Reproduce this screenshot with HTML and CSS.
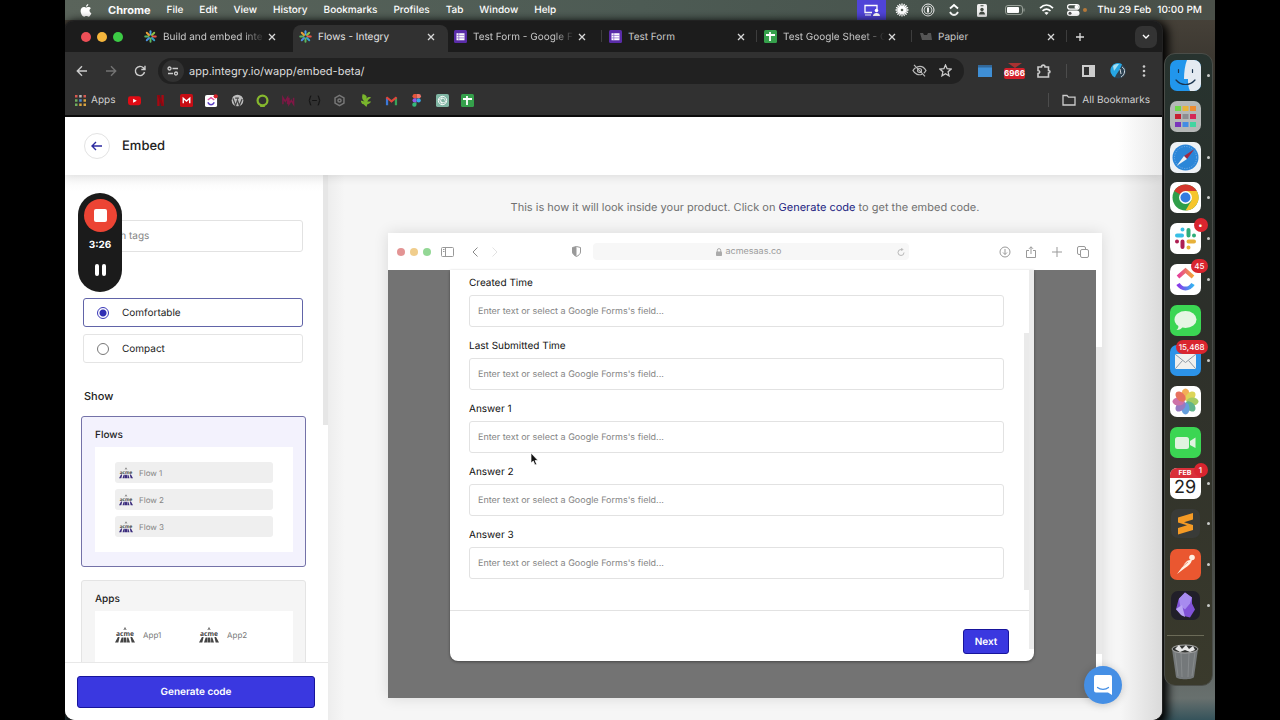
FILE: index.html
```html
<!DOCTYPE html>
<html lang="en">
<head>
<meta charset="utf-8">
<title>Flows - Integry</title>
<link rel="stylesheet" href="styles.css">
</head>
<body>
<svg class="defs" aria-hidden="true">
  <symbol id="integry" viewBox="0 0 16 16"><g stroke-width="2.4" stroke-linecap="round"><path d="M8 5.500V1.500" stroke="#4aa3e8"/><path d="M9.800 6.200l2.800-2.800" stroke="#8bc34a"/><path d="M10.500 8h4" stroke="#e8574a"/><path d="M9.800 9.800l2.800 2.800" stroke="#35a0c8"/><path d="M8 10.500v4" stroke="#5cb85c"/><path d="M6.200 9.800l-2.800 2.800" stroke="#4a8fe0"/><path d="M5.500 8h-4" stroke="#58b368"/><path d="M6.200 6.200L3.400 3.400" stroke="#e8a03a"/></g></symbol>
  <symbol id="x" viewBox="0 0 8 8"><path d="M1 1l6 6M7 1L1 7" stroke="#d8d8d8" stroke-width="1.300"/></symbol>
  <symbol id="gform" viewBox="0 0 13 13"><rect width="13" height="13" rx="1.500" fill="#5a2ca8"/><path d="M2.500 3.200h8v7h-8z" fill="#fff"/><path d="M2.500 5.400h8M2.500 7.900h8M4.800 3v7.500" stroke="#8a63c9" stroke-width=".7"/></symbol>
  <symbol id="gsheet" viewBox="0 0 13 13"><rect width="13" height="13" rx="1.500" fill="#35a04b"/><path d="M6 2v9M2 5h9" stroke="#fff" stroke-width="1.800"/></symbol>
  <symbol id="acme" viewBox="0 0 24 20"><path d="M10.500 4L12 1l1.500 3M11 3h2" fill="none" stroke="#555" stroke-width=".8"/><text x="12" y="11" text-anchor="middle" class="acme-word">acme</text><path d="M3.500 12.500h2L4 19H0zM8 13h2l-.5 6H6zM10.500 13h3l.5 6h-4zM14.500 13H16l2 6h-3.500zM18.500 12.500h2L24 19h-4z" fill="currentColor"/></symbol>
</svg>
<div class="screen">
  <header class="menubar">
    <nav class="menus">
      <svg class="apple" viewBox="0 0 12 14" fill="#fff"><path d="M8.500 0C8.500 1.600 7.300 3 6 3 5.900 1.500 7.200.2 8.500 0zM6.200 3.900c.6 0 1.300-.6 2.500-.6 1 0 2 .6 2.600 1.400-2.200 1.300-1.900 4.200.5 5.200-.7 1.800-1.800 3.700-3.100 3.700-.9 0-1.200-.6-2.300-.6-1.200 0-1.500.6-2.300.6C2.500 13.600.2 10.600.2 7.500c0-2.700 1.700-4.200 3.500-4.200 1.100 0 1.900.6 2.500.6z"/></svg>
      <b>Chrome</b><span>File</span><span>Edit</span><span>View</span><span>History</span><span>Bookmarks</span><span>Profiles</span><span>Tab</span><span>Window</span><span>Help</span>
    </nav>
    <div class="status">
      <span class="st share"><svg width="16" height="12" viewBox="0 0 16 12"><path d="M8 8.500H1V1.500h12V5" fill="none" stroke="#fff" stroke-width="1.300"/><circle cx="12.500" cy="6.500" r="1.800" fill="#fff"/><path d="M9 12c0-4 7-4 7 0zM1 10.500h6v1H1z" fill="#fff"/></svg></span>
      <span class="st"><svg width="14" height="14" viewBox="0 0 14 14" stroke="#fff" stroke-width="1.300" stroke-linecap="round"><circle cx="7" cy="7" r="3.300" fill="#fff"/><path d="M7 1v12M1 7h12M2.800 2.800l8.400 8.400M11.200 2.800l-8.400 8.400M4.700 1.500l4.600 11M9.300 1.500l-4.600 11M1.500 4.700l11 4.600M1.500 9.300l11-4.600"/><circle cx="7" cy="7" r="1.300" fill="#566056" stroke="none"/></svg></span>
      <span class="st"><svg width="14" height="14" viewBox="0 0 14 14" fill="none" stroke="#eee"><circle cx="7" cy="7" r="6"/><circle cx="7" cy="7" r="4" stroke-width=".8"/><path d="M7 4.500v5" stroke-width="2"/></svg></span>
      <span class="st"><svg width="12" height="14" viewBox="0 0 12 14" fill="none" stroke="#fff" stroke-width="1.800"><path d="M2 5.500l4-3.500 4 3.500M2 9c2 4 6 4 8 0"/></svg></span>
      <span class="st id"><svg width="10" height="13" viewBox="0 0 10 13"><rect width="10" height="13" rx="1.500" fill="#eee"/><circle cx="5" cy="5.500" r="1.700" fill="#434b43"/><path d="M2 10.500c0-4 6-4 6 0zM3.500 1.300h3v1h-3z" fill="#434b43"/></svg></span>
      <span class="st wide"><svg width="20" height="10" viewBox="0 0 20 10"><rect x=".5" y=".5" width="17" height="9" rx="2.500" fill="none" stroke="#9aa29a"/><rect x="2" y="2" width="12" height="6" rx="1" fill="#fff"/><path d="M19 3.500v3" stroke="#9aa29a"/></svg></span>
      <span class="st"><svg width="15" height="12" viewBox="0 0 15 12" fill="none" stroke="#fff" stroke-width="1.700"><path d="M1 4.200c4-4 9-4 13 0M3.500 6.900c2.500-2.300 5.500-2.300 8 0"/><path d="M5.300 8.800c1.500-1 2.900-1 4.400 0L7.500 11z" fill="#fff" stroke="none"/></svg></span>
      <span class="st cc"><svg width="13" height="12" viewBox="0 0 13 12"><rect x=".6" y=".6" width="11.500" height="4.500" rx="2.200" fill="none" stroke="#fff" stroke-width="1.200"/><circle cx="9.500" cy="2.900" r="2" fill="#fff"/><rect y="6.500" width="12.500" height="5.500" rx="2.700" fill="#fff"/><circle cx="3" cy="9.200" r="1.500" fill="#555"/></svg><i></i></span>
      <span>Thu 29 Feb</span><span>10:00 PM</span>
    </div>
  </header>
  <div class="desktop">
    <main class="browser">
      <div class="tabs">
        <div class="lights"><i></i><i></i><i></i></div>
        <div class="tab"><svg class="fav"><use href="#integry"/></svg><span class="fade">Build and embed inte</span><button aria-label="Close tab"><svg><use href="#x"/></svg></button></div>
        <div class="tab active"><svg class="fav"><use href="#integry"/></svg><span>Flows - Integry</span><button aria-label="Close tab"><svg><use href="#x"/></svg></button></div>
        <div class="tab sep"><svg class="fav"><use href="#gform"/></svg><span class="fade">Test Form - Google F</span><button aria-label="Close tab"><svg><use href="#x"/></svg></button></div>
        <div class="tab sep"><svg class="fav"><use href="#gform"/></svg><span>Test Form</span><button aria-label="Close tab"><svg><use href="#x"/></svg></button></div>
        <div class="tab sep"><svg class="fav"><use href="#gsheet"/></svg><span class="fade">Test Google Sheet - G</span><button aria-label="Close tab"><svg><use href="#x"/></svg></button></div>
        <div class="tab sep"><svg class="fav" viewBox="0 0 13 13"><path d="M1 3h3l1 2h3l1-2h3l1 7H3z" fill="#555"/></svg><span>Papier</span><button aria-label="Close tab"><svg><use href="#x"/></svg></button></div>
        <button class="newtab" aria-label="New tab"><svg width="10" height="10" viewBox="0 0 10 10"><path d="M5 1v8M1 5h8" stroke="#ddd" stroke-width="1.300"/></svg></button>
        <button class="tabmenu" aria-label="Search tabs"><svg width="8" height="6" viewBox="0 0 8 6"><path d="M1 1l3 3 3-3" fill="none" stroke="#fff" stroke-width="1.400"/></svg></button>
      </div>
      <div class="toolbar">
        <div class="navs">
          <button aria-label="Back"><svg width="12" height="12" viewBox="0 0 12 12" fill="none" stroke="#ccc" stroke-width="1.400"><path d="M11 6H1.500M6 1.300L1.300 6 6 10.700"/></svg></button>
          <button aria-label="Forward"><svg width="12" height="12" viewBox="0 0 12 12" fill="none" stroke="#737373" stroke-width="1.400"><path d="M1 6h9.500M6 1.300L10.700 6 6 10.700"/></svg></button>
          <button aria-label="Reload"><svg width="12" height="12" viewBox="0 0 12 12" fill="none" stroke="#ccc" stroke-width="1.400"><path d="M10.500 7A4.600 4.600 0 1 1 9.300 2.800L10.800 4.300M11 .8v3.700H7.300"/></svg></button>
        </div>
        <div class="omni">
          <button class="site" aria-label="Site settings"><svg width="12" height="10" viewBox="0 0 12 10" fill="none" stroke="#ccc" stroke-width="1.300"><path d="M5.500 2.500H11M1 7.500h5"/><circle cx="2.500" cy="2.500" r="1.500"/><circle cx="9" cy="7.500" r="1.500"/></svg></button>
          <input type="text" aria-label="Address" value="app.integry.io/wapp/embed-beta/">
          <svg width="15" height="13" viewBox="0 0 15 13" fill="none" stroke="#bbb" stroke-width="1.200"><path d="M2 .8l11 11.500M5 3C9 1.500 12 3 14 6.500c-.6 1.200-1.300 2-2.200 2.700M3.500 3.800C2.500 4.500 1.500 5.500 1 6.500c2 4 6 5 9 3.700"/><circle cx="7.500" cy="6.500" r="2"/></svg>
          <svg width="13" height="13" viewBox="0 0 13 13" fill="none" stroke="#ccc" stroke-width="1.300"><path d="M6.500 1l1.600 3.700 4 .4-3 2.700.9 4-3.500-2.100L3 11.800l.9-4-3-2.700 4-.4z"/></svg>
        </div>
        <div class="exts">
          <svg width="14" height="14" viewBox="0 0 14 14"><rect y="1" width="14" height="12" fill="#3f8fd6"/><path d="M0 1h14v2.500H0z" fill="#32689a"/></svg>
          <span class="count"><svg width="14" height="5" viewBox="0 0 14 5"><path d="M0 0h14L7 5z" fill="#a83232"/></svg><b>6966</b></span>
          <svg width="14" height="14" viewBox="0 0 14 14" fill="none" stroke="#ccc" stroke-width="1.600"><path d="M1 3h3.500C4.500.5 8 .5 8 3h3.500v3.500c2 0 2 2.500 0 2.500v4H1V9.500c2.300-.3 2.300-2.700 0-3z"/></svg>
          <i class="bar"></i>
          <svg width="13" height="12" viewBox="0 0 13 12"><rect x="1" y="1" width="11" height="10" fill="none" stroke="#ccc" stroke-width="2"/><path d="M7 1h5v10H7z" fill="#ccc"/></svg>
          <svg width="17" height="16" viewBox="0 0 17 16"><circle cx="8.500" cy="8" r="7.500" fill="#2d4252"/><path d="M12 1.300A7.500 7.500 0 1 0 5 14.500C6 11 9 9 12 1.300z" fill="#27a7e5"/><path d="M3 3c2-2 4-2 6-2L4 8z" fill="#a6e0f3"/><path d="M12 4c4 2 3 8-1 10M10 6l1 5" fill="none" stroke="#cfd7dd"/></svg>
          <svg width="4" height="12" viewBox="0 0 4 12" fill="#ccc"><circle cx="2" cy="1.500" r="1.300"/><circle cx="2" cy="6" r="1.300"/><circle cx="2" cy="10.500" r="1.300"/></svg>
        </div>
      </div>
      <div class="bookmarks">
        <a href="#" class="apps"><svg width="11" height="11" viewBox="0 0 11 11"><path d="M0 0h2.500v2.500H0z" fill="#d85a50"/><path d="M4.200 0h2.500v2.500H4.200z" fill="#bbb"/><path d="M8.500 0H11v2.500H8.500z" fill="#d85a50"/><path d="M0 4.200h2.500v2.500H0z" fill="#6fae5f"/><path d="M4.200 4.200h2.500v2.500H4.200z" fill="#4b8bd4"/><path d="M8.500 4.200H11v2.500H8.500z" fill="#d9a441"/><path d="M0 8.500h2.500V11H0z" fill="#6fae5f"/><path d="M4.200 8.500h2.500V11H4.200z" fill="#d9a441"/><path d="M8.500 8.500H11V11H8.500z" fill="#d9a441"/></svg>Apps</a>
        <div class="bm">
          <svg viewBox="0 0 14 14"><rect y="2.500" width="14" height="9.500" rx="2.500" fill="#e00b14"/><path d="M5.500 5v4.500l4-2.200z" fill="#fff"/></svg>
          <svg viewBox="0 0 14 14"><path d="M3.500 1H6v12H3.500zM8 1h2.500v12H8z" fill="#a80812"/><path d="M3.500 1H6l4.500 12H8z" fill="#8c0710"/></svg>
          <svg viewBox="0 0 14 14"><rect width="14" height="14" rx="2" fill="#c80d14"/><path d="M3.500 10V4.500L7 7.500l3.500-3V10" fill="none" stroke="#fff" stroke-width="1.500"/></svg>
          <svg viewBox="0 0 14 14"><rect y="1" width="13" height="13" rx="2" fill="#fff"/><path d="M3 6.500l3.500-2.500L10 6.500" fill="none" stroke="#e050a0" stroke-width="1.500"/><path d="M3 9c2 3.500 5 3.500 7 0" fill="none" stroke="#5b3fc2" stroke-width="1.700"/><circle cx="11.500" cy="2.500" r="2.300" fill="#d5232b"/></svg>
          <svg viewBox="0 0 14 14"><circle cx="7" cy="7" r="6.300" fill="#bdbdbd"/><path d="M2 4.500l3 8 2-6 2 6 3-7M4.500 4.500h4" fill="none" stroke="#444" stroke-width="1.300"/></svg>
          <svg viewBox="0 0 14 14"><circle cx="7" cy="7" r="5.300" fill="none" stroke="#86b82e" stroke-width="2.400"/><path d="M4.500 13.500h5" stroke="#86b82e" stroke-width="1.500"/></svg>
          <svg viewBox="0 0 14 14" fill="none" stroke="#7e1745" stroke-width="1.600"><path d="M1 11V4l2.500 4L6 4v7M7.500 4v7l2.500-4 2.500 4V4"/></svg>
          <svg viewBox="0 0 14 14" fill="none" stroke="#141414" stroke-width="1.300"><path d="M3.500 2C1.500 2 2.800 7 .8 7c2 0 .7 5 2.700 5M10.500 2c2 0 .7 5 2.700 5-2 0-.7 5-2.700 5M4.500 7h5"/></svg>
          <svg viewBox="0 0 14 14" fill="none" stroke="#777" stroke-width="1.600"><path d="M7 1.500l4.800 2.700v5.600L7 12.500 2.200 9.800V4.200z"/><circle cx="7" cy="7" r="1.700"/></svg>
          <svg viewBox="0 0 14 14"><path d="M4 0c4 1 5 3 4 5 2-2 4-2 5-1-2 1-3 2-4 4h4c-1 2-3 3-4 3l-1 3-3-3c-2 0-3-2-3-4l4 1C3 6 3 3 4 0z" fill="#79b52c"/></svg>
          <svg viewBox="0 0 14 14" fill="none" stroke-width="2.400"><path d="M2.200 12V4" stroke="#3c78d8"/><path d="M11.800 12V4" stroke="#37a35a"/><path d="M1.500 3.500L7 8l5.500-4.500" stroke="#e0443a"/></svg>
          <svg viewBox="0 0 14 14"><path d="M7 0H5a2.300 2.300 0 0 0 0 4.600h2z" fill="#e8553a"/><path d="M7 0h2.500a2.300 2.300 0 0 1 0 4.600H7z" fill="#f0776b"/><path d="M7 4.600H5a2.300 2.300 0 0 0 0 4.600h2z" fill="#9059e8"/><circle cx="9.300" cy="6.900" r="2.300" fill="#35a8e8"/><path d="M7 9.200H5a2.300 2.300 0 1 0 2 2.300z" fill="#34b878"/></svg>
          <svg viewBox="0 0 14 14"><rect width="14" height="14" rx="2" fill="#7fb5a3"/><g fill="none" stroke="#fff"><circle cx="7" cy="7" r="4.500"/><path d="M4 4.500l5 .5 1.500 4M10 9.500L5 9 3.500 5M7 2.500L5 7l2 4.500" stroke-width=".8"/></g></svg>
          <svg><use href="#gsheet"/></svg>
        </div>
        <a href="#" class="all"><svg width="14" height="12" viewBox="0 0 14 12" fill="none" stroke="#ccc" stroke-width="1.300"><path d="M1 1.500h4l1.500 1.700H13V11H1z"/></svg>All Bookmarks</a>
      </div>
      <div class="page">
        <header class="apphead">
          <button aria-label="Back"><svg width="12" height="10" viewBox="0 0 12 10" fill="none" stroke="#2c2aa0" stroke-width="1.400"><path d="M11 5H1.500M5 1L1 5l4 4"/></svg></button>
          <h1>Embed</h1>
        </header>
        <div class="cols">
          <aside class="side">
            <div class="scroll">
              <form class="opts">
                <input class="tags" type="text" placeholder="Search tags" aria-label="Search tags">
                <label class="radio on"><input type="radio" name="density" checked>Comfortable</label>
                <label class="radio"><input type="radio" name="density">Compact</label>
              </form>
              <h2>Show</h2>
              <section class="card sel">
                <h3>Flows</h3>
                <ul class="flows">
                  <li><svg><use href="#acme"/></svg>Flow 1</li>
                  <li><svg><use href="#acme"/></svg>Flow 2</li>
                  <li><svg><use href="#acme"/></svg>Flow 3</li>
                </ul>
              </section>
              <section class="card">
                <h3>Apps</h3>
                <ul class="applist">
                  <li><svg><use href="#acme"/></svg>App1</li>
                  <li><svg><use href="#acme"/></svg>App2</li>
                </ul>
              </section>
              <i class="thumb"></i>
            </div>
            <footer><button class="primary">Generate code</button></footer>
            <div class="recorder">
              <button class="stop" aria-label="Stop recording"><i></i></button>
              <time>3:26</time>
              <button class="pause" aria-label="Pause"><i></i><i></i></button>
            </div>
          </aside>
          <section class="stage">
            <p class="hint">This is how it will look inside your product. Click on <a href="#">Generate code</a> to get the embed code.</p>
            <div class="preview">
              <div class="pbar">
                <div class="plights"><i></i><i></i><i></i></div>
                <svg width="13" height="10" viewBox="0 0 13 10" fill="none" stroke="#999"><rect x=".5" y=".5" width="12" height="9" rx="1"/><path d="M4.500 0v10M2 2.500h1.500M2 4.500h1.500"/></svg>
                <svg class="prev" width="26" height="10" viewBox="0 0 26 10" fill="none"><path d="M5.500.5L1 5l4.500 4.500" stroke="#888"/><path d="M20.500.5L25 5l-4.500 4.500" stroke="#e2e2e2"/></svg>
                <svg class="shield" width="9" height="11" viewBox="0 0 9 11"><path d="M4.500.5l4 1v4.500c0 2-2 3.500-4 4.500-2-1-4-2.500-4-4.500V1.500z" fill="#fff" stroke="#999"/><path d="M4.500.5v10c-2-1-4-2.500-4-4.500V1.500z" fill="#999"/></svg>
                <div class="purl"><span><svg width="6" height="8" viewBox="0 0 6 8"><rect y="3.500" width="6" height="4.500" rx=".8" fill="#aaa"/><path d="M1.300 4V2.300a1.700 1.700 0 0 1 3.400 0V4" fill="none" stroke="#aaa"/></svg>acmesaas.co</span><svg width="8" height="8" viewBox="0 0 8 8" fill="none" stroke="#aaa" stroke-width=".8"><path d="M7 4.500A3 3 0 1 1 4 1.500h1.500M4.300 0l1.500 1.500L4.300 3"/></svg></div>
                <div class="ptools">
                  <svg viewBox="0 0 12 12"><circle cx="6" cy="6" r="5"/><path d="M6 3v5.500M4 6.500l2 2 2-2"/></svg>
                  <svg viewBox="0 0 12 12"><path d="M4 4.500H1.500v7h9v-7H8M6 8V.8M4 2.800l2-2 2 2"/></svg>
                  <svg viewBox="0 0 12 12"><path d="M6 1v10M1 6h10"/></svg>
                  <svg viewBox="0 0 12 12"><rect x="3.500" y="3.500" width="8" height="8" rx="1.500"/><path d="M3.500 8.500H2A1.500 1.500 0 0 1 .5 7V2A1.500 1.500 0 0 1 2 .5h5A1.500 1.500 0 0 1 8.500 2v1.500"/></svg>
                </div>
              </div>
              <div class="pbody">
                <div class="backdrop">
                  <form class="modal">
                    <div class="mmain">
                      <div class="fields">
                        <label>Created Time<input type="text" placeholder="Enter text or select a Google Forms's field..."></label>
                        <label>Last Submitted Time<input type="text" placeholder="Enter text or select a Google Forms's field..."></label>
                        <label>Answer 1<input type="text" placeholder="Enter text or select a Google Forms's field..."></label>
                        <label>Answer 2<input type="text" placeholder="Enter text or select a Google Forms's field..."></label>
                        <label>Answer 3<input type="text" placeholder="Enter text or select a Google Forms's field..."></label>
                        <i class="fthumb"></i>
                      </div>
                      <div class="mfoot"><button type="button" class="primary next">Next</button></div>
                    </div>
                    <i class="mtrack"></i>
                  </form>
                </div>
                <div class="ptrack"><i></i></div>
              </div>
            </div>
            <button class="chat" aria-label="Open chat"><svg width="18" height="20" viewBox="0 0 18 20"><path d="M2 0h14a2 2 0 0 1 2 2v18l-4-2.500H2a2 2 0 0 1-2-2V2a2 2 0 0 1 2-2z" fill="#fff"/><path d="M3.500 12.500c3 2.600 8 2.600 11 0" fill="none" stroke="#458fe5" stroke-width="1.200" stroke-linecap="round"/></svg></button>
            <svg class="pointer" width="9" height="14" viewBox="0 0 9 14"><path d="M1 1v10l2.300-2 1.600 4 1.800-.8L5 8.500h3z" fill="#111" stroke="#fff" stroke-width=".7"/></svg>
          </section>
        </div>
      </div>
    </main>
    <aside class="dock">
      <ul>
        <li class="run"><svg viewBox="0 0 31 31"><rect width="31" height="31" rx="7" fill="#2196ec"/><path d="M17 0h7a7 7 0 0 1 7 7v17a7 7 0 0 1-7 7h-4c-2-4-2-8-2-12h-4C14 12 15 5 17 0z" fill="#e4eaf1"/><path d="M8.500 9.500v3M22.500 9.500v3M6 20c5 6 14 6 19 0" fill="none" stroke="#1b3550" stroke-width="1.200" stroke-linecap="round"/></svg></li>
        <li><svg viewBox="0 0 31 31"><rect width="31" height="31" rx="7" fill="#b5b8b7"/><path d="M5 5h6v5H5z" fill="#6ed84a"/><path d="M12.500 5h6v5h-6z" fill="#e9b53a"/><path d="M20 5h6v5h-6z" fill="#ef8d32"/><path d="M5 13h6v5H5z" fill="#c61f31"/><path d="M12.500 13h6v5h-6z" fill="#8d8d91"/><path d="M20 13h6v5h-6z" fill="#d52857"/><path d="M5 21h6v5H5z" fill="#7a35bb"/><path d="M12.500 21h6v5h-6z" fill="#438ce3"/><path d="M20 21h6v5h-6z" fill="#41d5a0"/></svg></li>
        <li class="run"><svg viewBox="0 0 31 31"><rect width="31" height="31" rx="7" fill="#eef2f5"/><circle cx="15.500" cy="15.500" r="13" fill="#2b86d8"/><circle cx="15.500" cy="15.500" r="11" fill="none" stroke="#8abbe8" stroke-width=".8" stroke-dasharray="1 1.500"/><path d="M24.500 7L17 17l-3-3z" fill="#a32a42"/><path d="M6.500 24L17 17l-3-3z" fill="#f1f4f6"/></svg></li>
        <li class="run"><svg viewBox="0 0 31 31"><rect width="31" height="31" rx="7" fill="#fff"/><circle cx="15.500" cy="15.500" r="13" fill="#2f9e4a"/><path d="M15.500 15.500L4.200 9A13 13 0 0 1 26.800 9z" fill="#d4372c"/><path d="M15.500 9h11.300A13 13 0 0 1 15.500 28.500l6-10z" fill="#f6c52c"/><circle cx="15.500" cy="15.500" r="6.500" fill="#fff"/><circle cx="15.500" cy="15.500" r="5" fill="#347be0"/></svg></li>
        <li class="run"><svg viewBox="0 0 31 31"><rect width="31" height="31" rx="7" fill="#fff"/><g stroke-width="4" stroke-linecap="round"><path d="M7 12.500h5M12.500 6.500v.1" stroke="#39bfe5"/><path d="M18.500 7v5.500M24 12.500v.1" stroke="#2fad79"/><path d="M18.500 18.500H24M18.500 24.500v.1" stroke="#e7b13a"/><path d="M12.500 18.500V24M7 18.500v.1" stroke="#ad1d52"/></g></svg><b>•</b></li>
        <li class="run"><svg viewBox="0 0 31 31"><defs><linearGradient id="cu"><stop stop-color="#8b35e8"/><stop offset="1" stop-color="#34b3f2"/></linearGradient><linearGradient id="ct"><stop stop-color="#e43e9b"/><stop offset="1" stop-color="#f4a43a"/></linearGradient></defs><rect width="31" height="31" rx="7" fill="#fff"/><path d="M8 13l7.500-6.500L23 13" fill="none" stroke="url(#ct)" stroke-width="4"/><path d="M8 20c4 6 11 6 15 0" fill="none" stroke="url(#cu)" stroke-width="4"/></svg><b>45</b></li>
        <li><svg viewBox="0 0 31 31"><rect width="31" height="31" rx="7" fill="#3bd653"/><ellipse cx="15.500" cy="14.500" rx="11" ry="8.500" fill="#e6f6e4"/><path d="M8 20c1 2 0 4-1.500 5 3 0 5-1 6-3z" fill="#e6f6e4"/></svg></li>
        <li class="run"><svg viewBox="0 0 31 31"><rect width="31" height="31" rx="7" fill="#2c93e8"/><rect x="5" y="9" width="21" height="15" rx="1.500" fill="#f0f0ee"/><path d="M5.500 9.500l10 8 10-8M5.500 23.500l7-8M25.500 23.500l-7-8" fill="none" stroke="#8f9aa5"/></svg><b>15,468</b></li>
        <li><svg viewBox="0 0 31 31"><rect width="31" height="31" rx="7" fill="#fff"/><g opacity=".85"><ellipse cx="15.500" cy="8.500" rx="4" ry="6" fill="#f2a13a"/><ellipse cx="15.500" cy="8.500" rx="4" ry="6" fill="#d8ce3b" transform="rotate(45 15.500 15.500)"/><ellipse cx="15.500" cy="8.500" rx="4" ry="6" fill="#96c24a" transform="rotate(90 15.500 15.500)"/><ellipse cx="15.500" cy="8.500" rx="4" ry="6" fill="#46a878" transform="rotate(135 15.500 15.500)"/><ellipse cx="15.500" cy="8.500" rx="4" ry="6" fill="#4b8fd8" transform="rotate(180 15.500 15.500)"/><ellipse cx="15.500" cy="8.500" rx="4" ry="6" fill="#8563b8" transform="rotate(225 15.500 15.500)"/><ellipse cx="15.500" cy="8.500" rx="4" ry="6" fill="#c55a9a" transform="rotate(270 15.500 15.500)"/><ellipse cx="15.500" cy="8.500" rx="4" ry="6" fill="#e35a42" transform="rotate(315 15.500 15.500)"/></g></svg></li>
        <li><svg viewBox="0 0 31 31"><rect width="31" height="31" rx="7" fill="#3bd653"/><rect x="5" y="10" width="14" height="12" rx="2.500" fill="#dff3df"/><path d="M20 14l5.500-3.500v10.500L20 18z" fill="#dff3df"/></svg></li>
        <li class="run cal"><span>FEB</span><strong>29</strong><b>1</b></li>
        <li class="run"><svg viewBox="0 0 31 31"><rect x="1" y="1" width="29" height="29" rx="7" fill="#393b38"/><path d="M8 9.500L23 5v6.500l-9 2.700 9 2.800v5L8 26.500V20l9-2.700-9-2.800z" fill="#f49a25"/></svg></li>
        <li class="run"><svg viewBox="0 0 31 31"><rect width="31" height="31" rx="7" fill="#ea5730"/><circle cx="22" cy="8.500" r="2.800" fill="#fff0e2"/><path d="M20 11c-3 0-5 3-7 6l-6 8 8-6c3-2 6-4 7-8z" fill="#fff0e2"/><path d="M12 18l6-5" stroke="#ea5730" stroke-width=".6"/></svg></li>
        <li class="run"><svg viewBox="0 0 31 31"><rect x="1" y="1" width="29" height="29" rx="7" fill="#211f29"/><path d="M15 2.500l7 5v6l3 6-5 8-8-2-6-6 2.500-10z" fill="#8152d8"/><path d="M15 2.500l-6 6 1 7 5 4 5-6 2-6z" fill="#a78bef"/><path d="M6 19l6-4 3 12-4-2z" fill="#b9a4f4"/></svg></li>
      </ul>
      <hr>
      <svg class="trash" viewBox="0 0 28 36"><path d="M1 5h26l-4 28c-1 3-17 3-18 0z" fill="#74787a"/><path d="M4 8l3 24M10 9l1 24M18 9l-1 24M24 8l-3 24" stroke="#8b8f90" stroke-width=".8"/><ellipse cx="14" cy="5" rx="13" ry="4" fill="#303230" stroke="#aaa"/><path d="M4 5l4-4 3 4 4-4 3 4 4-3 2 4-5 2-5-2-5 2z" fill="#e8e8e8"/></svg>
    </aside>
  </div>
</div>
</body>
</html>
```
FILE: styles.css
```css
* { box-sizing: border-box; }
body {
  margin: 0;
  padding: 0 65px;
  background: #000;
  font: 11px/16px Inter, "Liberation Sans", sans-serif;
  text-rendering: geometricPrecision;
}
button { padding: 0; border: 0; background: none; font: inherit; text-rendering: inherit; display: flex; align-items: center; justify-content: center; }
input { font: inherit; text-rendering: inherit; }
a { color: inherit; text-decoration: none; }
ul, h1, h2, h3, p { margin: 0; padding: 0; list-style: none; }
svg { flex: none; display: block; }
.defs { position: absolute; width: 0; height: 0; }

.screen {
  height: 100vh;
  display: flex;
  flex-direction: column;
  overflow: hidden;
  background: linear-gradient(#4b453c 0, #3c3831 8%, #262a28 30%, #3a3a34 70%, #68706e 97%, #35535b 100%);
}
.menubar {
  flex: none;
  height: 20px;
  padding: 0 13px 0 15px;
  display: flex;
  justify-content: space-between;
  align-items: center;
  color: #fff;
  font-weight: 500;
  background: linear-gradient(90deg, #5a645b, #4d5b54 50%, #46514a 85%, #4b5049);
}
.menus { display: flex; align-items: center; gap: 16px; }
.menus span { font-size: 10px; }
.menus b { font-weight: 700; font-size: 11px; }
.apple { width: 12px; height: 13px; }
.status { display: flex; align-items: center; gap: 6px; font-size: 10px; }
.st { width: 20px; height: 20px; display: flex; align-items: center; justify-content: center; }
.st.wide { width: 30px; }
.st.share { width: 29px; background: #5044d8; }
.st.id { width: 24px; }
.st.cc { width: 29px; gap: 3px; }
.cc i { width: 4px; height: 4px; border-radius: 50%; background: #b5793a; }

.desktop { flex: 1; min-height: 0; display: flex; }
.browser {
  flex: 1;
  min-width: 0;
  display: flex;
  flex-direction: column;
  margin-top: 1px;
  border-radius: 9px 9px 10px 10px;
  overflow: hidden;
  box-shadow: 0 0 0 1px #222, 2px 4px 10px 4px #000;
  background: #313131;
}
.tabs { flex: none; height: 31px; display: flex; align-items: center; background: #1c1c1c; color: #c9c9c9; font-size: 10px; padding-right: 5px; }
.lights { flex: none; width: 73px; padding-left: 16px; display: flex; gap: 6px; }
.lights i { width: 10px; height: 10px; border-radius: 50%; background: #ee4f57; }
.lights i + i { background: #f5b63c; }
.lights i + i + i { background: #3ccb45; }
.tab {
  flex: 0 1 155px;
  min-width: 0;
  height: 27px;
  align-self: flex-end;
  padding: 0 13px 4px 6px;
  display: flex;
  align-items: center;
  gap: 6px;
  position: relative;
}
.tab span { flex: 1; min-width: 0; overflow: hidden; white-space: nowrap; }
.tab .fade { flex: 0 0 109px; mask-image: linear-gradient(90deg, #000 80px, transparent 102px); margin-right: -10px; }
.tab button { position: relative; }
.tab button svg { width: 8px; height: 8px; }
.fav { width: 13px; height: 13px; }
.active { background: #313131; border-radius: 8px 8px 0 0; color: #e4e4e4; }
.sep::after { content: ""; position: absolute; right: 1px; top: 5px; width: 1px; height: 12px; background: #3d3d3d; }
.newtab { width: 24px; height: 24px; }
.tabmenu { width: 22px; height: 22px; border-radius: 7px; background: #333; margin-left: auto; }

.toolbar { flex: none; height: 37px; display: flex; align-items: center; gap: 12px; padding: 0 16px 0 11px; }
.navs { display: flex; gap: 17px; }
.omni {
  flex: 1;
  height: 26px;
  border-radius: 13px;
  background: #212121;
  display: flex;
  align-items: center;
  gap: 12px;
  padding: 0 12px 0 4px;
}
.omni input { flex: 1; min-width: 0; border: 0; background: none; color: #ddd; font-size: 11px; padding: 0; outline: 0; }
.site { width: 22px; height: 22px; border-radius: 50%; background: #313131; margin-right: -7px; }
.exts { display: flex; align-items: center; gap: 15px; padding-left: 2px; }
.count { width: 21px; margin: 0 -3px; display: flex; flex-direction: column; align-items: center; }
.count b { background: #d3202b; color: #fff; font-size: 8px; line-height: 11px; border-radius: 2px; width: 100%; text-align: center; }
.bar { width: 1px; height: 14px; background: #4c4c4c; }
.bookmarks { flex: none; height: 28px; display: flex; align-items: center; gap: 13px; padding: 0 12px 4px 10px; color: #cfcfcf; font-size: 10px; border-bottom: 2px solid #0c0c0c; }
.apps { display: flex; align-items: center; gap: 5px; }
.bm { width: 346px; display: flex; justify-content: space-between; }
.bm svg { width: 13px; height: 13px; }
.all { margin-left: auto; display: flex; align-items: center; gap: 6px; border-left: 1px solid #4c4c4c; padding-left: 13px; line-height: 14px; }

.page { flex: 1; min-height: 0; display: flex; flex-direction: column; background: #f6f6f6; color: #222; }
.apphead {
  flex: none;
  height: 58px;
  display: flex;
  align-items: center;
  gap: 12px;
  padding: 0 19px;
  background: linear-gradient(90deg, #fff 96%, #e9e9e9);
  box-shadow: 0 2px 9px #0000001a;
  z-index: 1;
}
.apphead button { width: 26px; height: 26px; border-radius: 50%; border: 1px solid #e3e3e3; }
h1 { font-size: 13px; font-weight: 500; }
.cols { flex: 1; min-height: 0; display: flex; }
.side { flex: none; width: 263px; position: relative; display: flex; flex-direction: column; background: #fff; }
.scroll { flex: 1; min-height: 0; overflow: hidden; position: relative; padding: 45px 22px 0 16px; background: linear-gradient(#f8f8f8, #fff 16px); }
.thumb { position: absolute; right: 0; top: 0; width: 5px; height: 250px; background: #e6e6e6; }
.opts { display: flex; flex-direction: column; gap: 7px; padding: 0 3px 0 2px; font-size: 10px; }
.tags { height: 32px; border: 1px solid #e2e2e2; border-radius: 3px; padding: 0 9px; margin-bottom: 39px; background: #fff; min-width: 0; }
.tags::placeholder { color: #858585; }
.radio { height: 29px; border: 1px solid #e4e4e4; border-radius: 3px; display: flex; align-items: center; gap: 13px; padding-left: 13px; }
.on { border-color: #6164a8; }
.radio input { appearance: none; width: 12px; height: 12px; margin: 0; border: 1px solid #777; border-radius: 50%; }
.radio input:checked { border-color: #3a38b8; background: radial-gradient(#302eb4 0 3px, #fff 4px); }
h2 { font-size: 11px; font-weight: 500; padding: 25px 0 12px 3px; }
.card { border: 1px solid #e4e4e4; border-radius: 3px; background: #f5f5f5; padding: 10px 12px 14px 13px; margin-bottom: 13px; }
.card.sel { border-color: #7472a8; background: #f3f2fd; }
h3 { font-size: 10px; font-weight: 500; padding-bottom: 4px; }
.flows { background: #fff; padding: 15px 20px; display: flex; flex-direction: column; gap: 6px; }
.flows li { height: 21px; border-radius: 3px; background: #efefef; display: flex; align-items: center; gap: 6px; padding-left: 4px; color: #858585; font-size: 8px; }
.flows svg { width: 14px; height: 12px; color: #3b2c7d; }
.acme-word { font: 700 8px "Open Sans", sans-serif; fill: #444; }
.applist { background: #fff; height: 100px; padding: 14px 20px; display: grid; grid-template-columns: 84px 1fr; font-size: 8px; color: #777; }
.applist li { display: flex; align-items: center; gap: 8px; height: 20px; }
.applist svg { width: 20px; height: 18px; color: #444; }
.side footer { flex: none; border-top: 1px solid #e8e8e8; padding: 13px 13px 12px 12px; }
.primary { background: #3a38e0; border: 1px solid #17149c; border-radius: 3px; color: #fff; font-size: 10px; font-weight: 600; }
.side .primary { width: 100%; height: 32px; }
.recorder {
  position: absolute;
  left: 13px;
  top: 18px;
  width: 44px;
  height: 99px;
  border-radius: 22px;
  background: #1b1b1b;
  color: #fff;
  display: flex;
  flex-direction: column;
  align-items: center;
  padding: 6px 0;
}
.stop { width: 33px; height: 33px; border-radius: 50%; background: #ec4434; }
.stop i { width: 13px; height: 13px; border-radius: 2px; background: #fff; }
.recorder time { font: 700 10px/26px Inter, sans-serif; }
.pause { gap: 3px; height: 24px; }
.pause i { width: 4px; height: 12px; border-radius: 2px; background: #fff; }

.stage {
  flex: 1;
  min-width: 0;
  position: relative;
  display: flex;
  flex-direction: column;
  padding: 24px 60px 22px 60px;
  background: linear-gradient(90deg, #ededed, #f6f6f6 2%, #f6f6f6 95%, #dadada);
}
.hint { text-align: center; color: #707070; padding-bottom: 18px; }
.hint a { color: #211c80; }
.preview { flex: 1; min-height: 0; display: flex; flex-direction: column; box-shadow: 0 0 14px #0000001f; }
.pbar { flex: none; height: 37px; background: #fff; display: flex; align-items: center; padding: 0 13px 0 9px; }
.plights { display: flex; gap: 5px; margin-right: 10px; }
.plights i { width: 8px; height: 8px; border-radius: 50%; background: #e39494; }
.plights i + i { background: #f0cd8c; }
.plights i + i + i { background: #93d795; }
.prev { margin-left: 18px; }
.shield { margin-left: 74px; }
.purl { flex: 1; max-width: 316px; height: 17px; margin-left: 12px; border-radius: 4px; background: #f7f7f7; color: #9b9b9b; font-size: 9px; display: flex; align-items: center; padding-right: 4px; }
.purl span { flex: 1; display: flex; align-items: center; justify-content: center; gap: 3px; padding-left: 8px; }
.ptools { margin-left: auto; display: flex; gap: 14px; }
.ptools svg { width: 12px; height: 12px; fill: none; stroke: #999; stroke-width: 1; }
.pbody { flex: 1; min-height: 0; display: flex; }
.backdrop { flex: 1; min-width: 0; background: #737373; display: flex; padding: 0 62px 37px; }
.ptrack { width: 6px; background: #fff; padding: 77px 0 44px; display: flex; }
.ptrack i { flex: 1; background: #e9e9e9; }
.modal { flex: 1; min-width: 0; background: #fff; border-radius: 0 0 8px 8px; display: flex; box-shadow: 0 1px 3px #0006; }
.mmain { flex: 1; min-width: 0; display: flex; flex-direction: column; }
.mtrack { width: 5px; margin-bottom: 12px; background: #ececec; }
.fields { flex: 1; min-height: 0; position: relative; padding: 5px 25px 0 19px; display: flex; flex-direction: column; gap: 11px; }
.fields label { display: flex; flex-direction: column; gap: 4px; color: #111; font-size: 10px; }
.fields input { height: 32px; border: 1px solid #e2e2e2; border-radius: 3px; padding: 0 8px; background: #fff; min-width: 0; font-size: 9px; }
.fields input::placeholder { color: #858585; }
.fthumb { position: absolute; right: 0; top: 63px; bottom: 20px; width: 5px; background: #eaeaea; }
.mfoot { flex: none; border-top: 1px solid #e2e2e2; display: flex; justify-content: flex-end; padding: 18px 20px 7px; }
.next { width: 46px; height: 25px; }
.chat { position: absolute; right: 40px; bottom: 16px; width: 38px; height: 38px; border-radius: 50%; background: #458fe5; box-shadow: 0 1px 8px #0003; }
.pointer { position: absolute; left: 202px; top: 277px; }

.dock {
  flex: none;
  width: 49px;
  margin: 33px 2px 34px 2px;
  padding: 6px 0 5px;
  border: 1px solid #4a4d49;
  border-radius: 11px;
  background: linear-gradient(#27332f, #2c2f2a 40%, #3a3a2c);
  display: flex;
  flex-direction: column;
  align-items: center;
}
.dock ul { flex: 1; display: flex; flex-direction: column; justify-content: space-between; margin-right: 7px; }
.dock li { width: 31px; height: 31px; position: relative; }
.dock li svg { width: 31px; height: 31px; }
.run::after { content: ""; position: absolute; right: -9px; top: 14px; width: 3px; height: 3px; border-radius: 50%; background: #c9cbc8; }
.dock li b { position: absolute; right: -7px; top: -5px; min-width: 14px; height: 14px; padding: 0 3px; border-radius: 7px; background: #d9252f; color: #fff; font: 500 8px/14px Inter, sans-serif; text-align: center; }
.cal { border-radius: 7px; background: #fff; display: flex; flex-direction: column; align-items: center; }
.cal span { align-self: stretch; border-radius: 7px 7px 0 0; background: #d9303a; color: #fff; font: 700 7px/10px Inter, sans-serif; padding-left: 9px; }
.cal strong { font: 400 18px/20px Inter, sans-serif; color: #222; }
.dock hr { width: 37px; margin: 14px 6px 8px 0; border: 0; border-top: 1px solid #6b6b58; }
.trash { width: 28px; height: 36px; margin-right: 7px; }
```
